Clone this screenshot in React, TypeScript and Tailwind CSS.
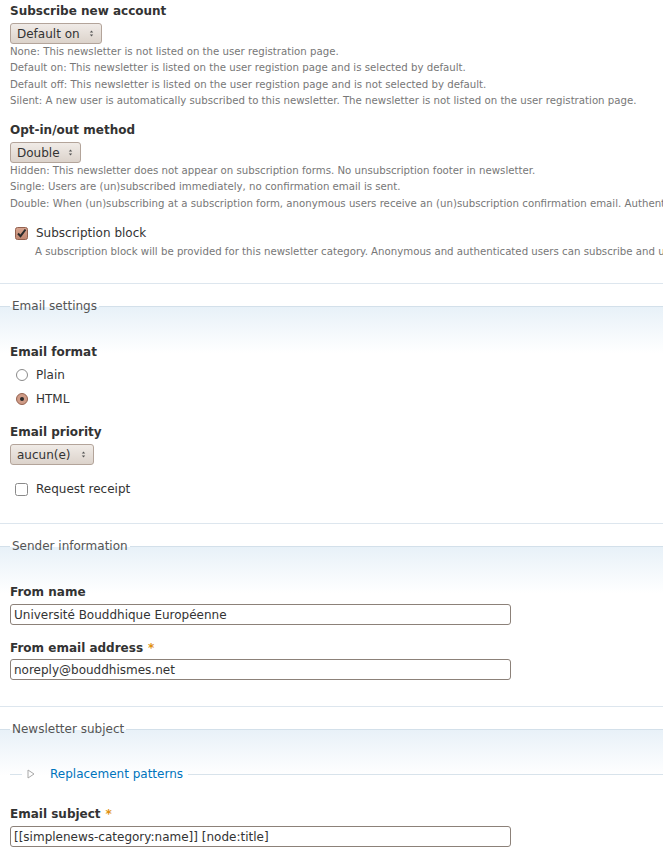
import type { ReactNode } from "react";

const SUBSCRIBE_HELP = [
  "None: This newsletter is not listed on the user registration page.",
  "Default on: This newsletter is listed on the user registion page and is selected by default.",
  "Default off: This newsletter is listed on the user registion page and is not selected by default.",
  "Silent: A new user is automatically subscribed to this newsletter. The newsletter is not listed on the user registration page.",
];

const OPT_HELP = [
  "Hidden: This newsletter does not appear on subscription forms. No unsubscription footer in newsletter.",
  "Single: Users are (un)subscribed immediately, no confirmation email is sent.",
  "Double: When (un)subscribing at a subscription form, anonymous users receive an (un)subscription confirmation email. Authenticated users are (un)subscribed immediately.",
];

function Label({ children, required }: { children: ReactNode; required?: boolean }) {
  return (
    <div className="text-[12px] leading-4 font-bold text-[#333]">
      {children}
      {required && <span className="ml-[5px] text-[#e09010]">*</span>}
    </div>
  );
}

function Help({ lines }: { lines: string[] }) {
  return (
    <div className="text-[10.2px] leading-[16.3px] text-[#777] whitespace-nowrap">
      {lines.map((l) => (
        <div key={l}>{l}</div>
      ))}
    </div>
  );
}

function Select({ value, width }: { value: string; width: string }) {
  return (
    <div
      className={`mt-1 h-[21px] ${width} flex items-center justify-between pl-[6px] pr-[7px] rounded-[3px] border border-[#b3a49a] bg-[linear-gradient(to_bottom,#f0ebe7,#dcd3cb)] text-[12px] text-[#333]`}
    >
      <span>{value}</span>
      <svg width="5" height="7" viewBox="0 0 5 7">
        <path d="M2.5 0.5 L4.2 2.6 H0.8 Z M2.5 6.5 L4.2 4.4 H0.8 Z" fill="#555" />
      </svg>
    </div>
  );
}

function Checkbox({ checked }: { checked?: boolean }) {
  return checked ? (
    <svg width="13" height="13" viewBox="0 0 13 13" className="shrink-0">
      <defs>
        <linearGradient id="cbg" x1="0" y1="0" x2="0" y2="1">
          <stop offset="0" stopColor="#d7a590" />
          <stop offset="1" stopColor="#c08670" />
        </linearGradient>
      </defs>
      <rect x="0.5" y="0.5" width="12" height="12" rx="2" fill="url(#cbg)" stroke="#93614f" />
      <path d="M3 6.5 L5.5 9.2 L10.5 2.5" fill="none" stroke="#2a2a2a" strokeWidth="2" />
    </svg>
  ) : (
    <svg width="13" height="13" viewBox="0 0 13 13" className="shrink-0">
      <rect x="0.5" y="0.5" width="12" height="12" rx="2" fill="#fff" stroke="#8a8a8a" />
    </svg>
  );
}

function Radio({ checked }: { checked?: boolean }) {
  return checked ? (
    <svg width="12" height="12" viewBox="0 0 12 12" className="shrink-0">
      <circle cx="6" cy="6" r="5.5" fill="#cf9b87" stroke="#95624f" />
      <circle cx="6" cy="6" r="2" fill="#2a2a2a" />
    </svg>
  ) : (
    <svg width="12" height="12" viewBox="0 0 12 12" className="shrink-0">
      <circle cx="6" cy="6" r="5.5" fill="#fff" stroke="#8a8a8a" />
    </svg>
  );
}

function TextInput({ value }: { value: string }) {
  return (
    <input
      readOnly
      value={value}
      className="block w-[501px] h-[21px] px-[3px] rounded-[3px] border border-[#8c8179] bg-white text-[12px] text-[#333] outline-none font-['DejaVu_Sans',sans-serif]"
    />
  );
}

function Section({ legend, children }: { legend: string; children: ReactNode }) {
  return (
    <fieldset className="mt-[14px] border-t border-b border-t-[#d3e0ea] border-b-[#dde6ee] px-[10px] pt-[30px] pb-[26px] bg-[linear-gradient(to_bottom,#e8f1f8,#ffffff_46px)]">
      <legend className="px-[2px] text-[12px] leading-4 text-[#555]">{legend}</legend>
      {children}
    </fieldset>
  );
}

export default function App() {
  return (
    <div className="w-[663px] h-[867px] overflow-hidden bg-white font-['DejaVu_Sans',sans-serif]">
      {/* end of the newsletter fieldset */}
      <div className="border-b border-[#dde6ee] px-[10px] pt-[3px] pb-[23px]">
        <Label>Subscribe new account</Label>
        <Select value="Default on" width="w-[92px]" />
        <Help lines={SUBSCRIBE_HELP} />

        <div className="mt-[13px]">
          <Label>Opt-in/out method</Label>
          <Select value="Double" width="w-[71px]" />
          <Help lines={OPT_HELP} />
        </div>

        <div className="mt-[13px] pl-[5px]">
          <div className="flex items-center gap-[8px] text-[12px] leading-4 text-[#333]">
            <Checkbox checked />
            <span>Subscription block</span>
          </div>
          <div className="mt-[3px] pl-[20px]">
            <Help lines={["A subscription block will be provided for this newsletter category. Anonymous and authenticated users can subscribe and unsubscribe using this block."]} />
          </div>
        </div>
      </div>

      <Section legend="Email settings">
        <Label>Email format</Label>
        <div className="mt-[7px] pl-[6px] flex flex-col gap-[8px] text-[12px] leading-4 text-[#333]">
          <div className="flex items-center gap-[8px]">
            <Radio />
            <span>Plain</span>
          </div>
          <div className="flex items-center gap-[8px]">
            <Radio checked />
            <span>HTML</span>
          </div>
        </div>
        <div className="mt-[17px]">
          <Label>Email priority</Label>
          <Select value="aucun(e)" width="w-[84px]" />
        </div>
        <div className="mt-[16px] pl-[5px] flex items-center gap-[8px] text-[12px] leading-4 text-[#333]">
          <Checkbox />
          <span>Request receipt</span>
        </div>
      </Section>

      <Section legend="Sender information">
        <Label>From name</Label>
        <div className="mt-1">
          <TextInput value="Université Bouddhique Européenne" />
        </div>
        <div className="mt-[15px]">
          <Label required>From email address</Label>
          <div className="mt-[3px]">
            <TextInput value="noreply@bouddhismes.net" />
          </div>
        </div>
      </Section>

      <Section legend="Newsletter subject">
        <fieldset className="-mt-px -mr-[10px] border-t border-[#d8e3eb] pl-[12px]">
          <legend className="px-[5px] flex items-center gap-[15px] text-[12px] leading-4">
            <svg width="8" height="10" viewBox="0 0 8 10">
              <path d="M1 1 L7 5 L1 9 Z" fill="none" stroke="#a8a8a8" strokeWidth="1" strokeLinejoin="round" />
            </svg>
            <span className="text-[#0074bd]">Replacement patterns</span>
          </legend>
        </fieldset>
        <div className="mt-[24px]">
          <Label required>Email subject</Label>
          <div className="mt-[4px]">
            <TextInput value="[[simplenews-category:name]] [node:title]" />
          </div>
        </div>
      </Section>
    </div>
  );
}
